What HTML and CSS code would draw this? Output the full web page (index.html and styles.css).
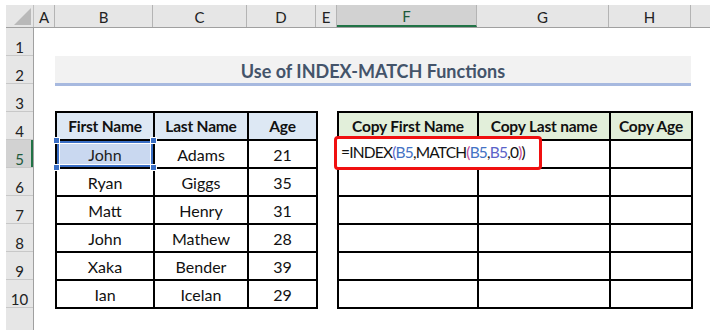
FILE: index.html
```html
<!DOCTYPE html>
<html lang="en">
<head>
    <meta charset="UTF-8">
    <title>Use of INDEX-MATCH Functions</title>
    <link rel="stylesheet" href="styles.css">
</head>
<body>
    <div class="sheet">
        <!-- Column headers -->
        <div class="col-heads">
            <div class="corner"><span class="corner-tri"></span></div>
            <div class="ch w-a">A</div>
            <div class="ch w-b">B</div>
            <div class="ch w-c">C</div>
            <div class="ch w-d">D</div>
            <div class="ch w-e">E</div>
            <div class="ch w-f active">F</div>
            <div class="ch w-g">G</div>
            <div class="ch w-h">H</div>
            <div class="ch w-i"></div>
        </div>

        <div class="sheet-body">
            <!-- Row headers -->
            <div class="row-heads">
                <div class="rh">1</div>
                <div class="rh">2</div>
                <div class="rh">3</div>
                <div class="rh">4</div>
                <div class="rh active">5</div>
                <div class="rh">6</div>
                <div class="rh">7</div>
                <div class="rh">8</div>
                <div class="rh">9</div>
                <div class="rh">10</div>
                <div class="rh rest"></div>
            </div>

            <div class="cells">
                <div class="title">Use of INDEX-MATCH Functions</div>

                <table class="data people">
                    <tr class="head">
                        <th class="w-b">First Name</th>
                        <th class="w-c">Last Name</th>
                        <th class="w-d">Age</th>
                    </tr>
                    <tr>
                        <td class="selected">
                            John
                            <span class="handle tl"></span><span class="handle tr"></span>
                            <span class="handle bl"></span><span class="handle br"></span>
                        </td>
                        <td>Adams</td><td>21</td>
                    </tr>
                    <tr><td>Ryan</td><td>Giggs</td><td>35</td></tr>
                    <tr><td>Matt</td><td>Henry</td><td>31</td></tr>
                    <tr><td>John</td><td>Mathew</td><td>28</td></tr>
                    <tr><td>Xaka</td><td>Bender</td><td>39</td></tr>
                    <tr><td>Ian</td><td>Icelan</td><td>29</td></tr>
                </table>

                <div class="copy-wrap">
                    <table class="data copy">
                        <tr class="head">
                            <th class="w-f">Copy First Name</th>
                            <th class="w-g">Copy Last name</th>
                            <th class="w-h">Copy Age</th>
                        </tr>
                        <tr><td colspan="2"></td><td></td></tr>
                        <tr><td></td><td></td><td></td></tr>
                        <tr><td></td><td></td><td></td></tr>
                        <tr><td></td><td></td><td></td></tr>
                        <tr><td></td><td></td><td></td></tr>
                        <tr><td></td><td></td><td></td></tr>
                    </table>
                    <div class="formula">=INDEX<span class="p1">(</span><span class="ref">B5</span>,MATCH<span class="p2">(</span><span class="ref">B5</span>,<span class="ref2">B5</span>,0<span class="p2">)</span>)</div>
                </div>
            </div>
        </div>
    </div>
</body>
</html>
```

FILE: styles.css
```css
body {
    margin: 0;
    background: #fff;
    font-family: Lato, "Open Sans", sans-serif;
    color: #111;
}
.sheet {
    padding: 5px 0 0 6px;
    width: 704px;
    height: 325px;
    overflow: hidden;
}

/* column headers */
.col-heads {
    display: flex;
    height: 23px;
    background: #e6e6e6;
    border-bottom: 1px solid #a0a0a0;
    box-sizing: border-box;
}
.corner {
    width: 28px;
    position: relative;
    border-right: 1px solid #c0c0c0;
    box-sizing: border-box;
}
.corner-tri {
    position: absolute;
    right: 2px;
    bottom: 2px;
    width: 0;
    height: 0;
    border-left: 17px solid transparent;
    border-bottom: 17px solid #b9b9b9;
}
.ch {
    display: flex;
    align-items: center;
    justify-content: center;
    font-size: 15px;
    color: #222;
    border-right: 1px solid #b4b4b4;
    box-sizing: border-box;
    padding-top: 2px;
}
.ch.active {
    background: #d2d2d2;
    color: #1e5a3c;
    border-bottom: 2px solid #217346;
}
.w-a { width: 21px; }
.w-b { width: 98px; }
.w-c { width: 94px; }
.w-d { width: 69px; }
.w-e { width: 21px; }
.w-f { width: 140px; }
.w-g { width: 132px; }
.w-h { width: 82px; }
.w-i { flex: 1; border-right: none; }

/* body */
.sheet-body {
    display: flex;
}
.row-heads {
    width: 28px;
    background: #e6e6e6;
    border-right: 1px solid #a0a0a0;
    box-sizing: border-box;
    height: 302px;
}
.rh {
    height: 28px;
    box-sizing: border-box;
    border-bottom: 1px solid #c8c8c8;
    display: flex;
    align-items: center;
    justify-content: center;
    font-size: 15px;
    color: #222;
    padding-top: 10px;
}
.rh.active {
    background: #d2d2d2;
    color: #1e5a3c;
    box-shadow: inset -2px 0 0 #217346;
}
.rh.rest { border-bottom: none; }

.cells {
    display: grid;
    grid-template-columns: 21px 98px 94px 69px 21px 140px 132px 82px 1fr;
    grid-template-rows: repeat(10, 28px);
}

.title {
    grid-column: 2 / 9;
    grid-row: 2;
    height: 30px;
    background: #f2f2f2;
    border-bottom: 3px solid #a7b9df;
    display: flex;
    align-items: center;
    justify-content: center;
    font-size: 18px;
    font-weight: bold;
    color: #44546a;
    padding-top: 2px;
    box-sizing: border-box;
}

/* tables */
.data {
    border-collapse: collapse;
    table-layout: fixed;
    font-size: 16px;
}
.data th, .data td {
    height: 28px;
    padding: 0;
    border: 2px solid #000;
    text-align: center;
    box-sizing: border-box;
}
.data th {
    font-weight: bold;
    font-size: 15.5px;
    letter-spacing: -0.2px;
}
.people {
    grid-column: 2 / 5;
    grid-row: 4 / 11;
    width: 261px;
    align-self: start;
    margin-top: -1px;
}
.people .head th { background: #dde8f4; }

.selected {
    position: relative;
    background: #c9d8f0;
    box-shadow: inset 0 0 0 2px #3a6fc6, inset 0 0 0 3px #fff;
    color: #222;
}
.handle {
    position: absolute;
    width: 5px;
    height: 5px;
    background: #3a6fc6;
    border: 1px solid #fff;
}
.handle.tl { left: -4px; top: -4px; }
.handle.tr { right: -4px; top: -4px; }
.handle.bl { left: -4px; bottom: -4px; }
.handle.br { right: -4px; bottom: -4px; }

.copy-wrap {
    grid-column: 6 / 9;
    grid-row: 4 / 11;
    position: relative;
    margin-top: -1px;
}
.copy {
    width: 354px;
}
.copy .head th { background: #e2efda; }

.formula {
    position: absolute;
    left: -3px;
    top: 25px;
    width: 208px;
    height: 34px;
    box-sizing: border-box;
    border: 3.5px solid #f01010;
    border-radius: 4px;
    background: #fff;
    font-size: 15.5px;
    letter-spacing: -0.8px;
    white-space: nowrap;
    line-height: 27px;
    padding-left: 4px;
    color: #111;
}
.ref { color: #4472c4; }
.ref2 { color: #5b63c8; }
.p1 { color: #5f6ad0; }
.p2 { color: #c44d9a; }
```
